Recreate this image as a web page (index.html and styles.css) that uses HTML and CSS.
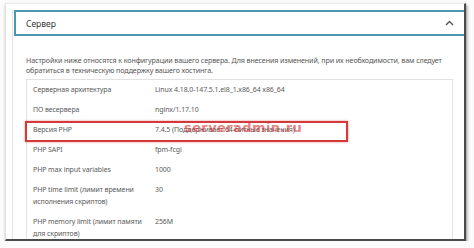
FILE: index.html
```html
<!DOCTYPE html>
<html lang="ru">
<head>
    <meta charset="UTF-8">
    <title>Сервер</title>
    <link rel="stylesheet" href="styles.css">
</head>
<body>

    <!-- Screenshot frame -->
    <div class="shot">
        <div class="panel">

            <!-- Accordion header -->
            <div class="acc-head">
                <span>Сервер</span>
                <svg class="chevron" width="9" height="6" viewBox="0 0 9 6">
                    <polyline points="1,5 4.5,1.5 8,5" fill="none" stroke="#555" stroke-width="1.4"/>
                </svg>
            </div>

            <p class="desc">Настройки ниже относятся к конфигурации вашего сервера. Для внесения изменений, при их необходимости, вам следует<br>обратиться в техническую поддержку вашего хостинга.</p>

            <div class="info">
                <div class="row"><div class="label">Серверная архитектура</div><div class="value">Linux 4.18.0-147.5.1.el8_1.x86_64 x86_64</div></div>
                <div class="row"><div class="label">ПО весервера</div><div class="value">nginx/1.17.10</div></div>
                <div class="row marked">
                    <div class="label">Версия PHP</div><div class="value">7.4.5 (Поддерживает 64-битные значения)</div>
                    <div class="highlight"></div>
                    <div class="watermark">serveradmin.ru</div>
                </div>
                <div class="row"><div class="label">PHP SAPI</div><div class="value">fpm-fcgi</div></div>
                <div class="row"><div class="label">PHP max input variables</div><div class="value">1000</div></div>
                <div class="row"><div class="label">PHP time limit (лимит времени<br>исполнения скриптов)</div><div class="value">30</div></div>
                <div class="row"><div class="label">PHP memory limit (лимит памяти<br>для скриптов)</div><div class="value">256M</div></div>
            </div>

        </div>
    </div>

</body>
</html>
```

FILE: styles.css
```css
body {
    margin: 0;
    background: #fbfbfb;
    font-family: "Noto Sans", "Open Sans", sans-serif;
    color: #555;
}
.shot {
    margin: 3px 0 0 5px;
    width: 461px;
    height: 238px;
    background: #fff;
    border-left: 1px solid #e2e2e2;
    border-top: 1px solid #ececec;
    border-right: 2px solid #4a4a4a;
    border-bottom: 2px solid #4a4a4a;
    box-shadow: 1px 2px 3px rgba(0, 0, 0, 0.45);
    overflow: hidden;
    padding: 6px 0 0 6px;
    box-sizing: border-box;
}
.panel {
    height: 100%;
    width: 453px;
    border-left: 1px solid #e4e4e4;
    border-right: 1px solid #e4e4e4;
    box-sizing: border-box;
}
.acc-head {
    display: flex;
    align-items: center;
    justify-content: space-between;
    height: 26px;
    width: 454px;
    margin-left: 1px;
    box-sizing: border-box;
    border: 2px solid #4d96b2;
    padding: 0 12px 0 10px;
    font-size: 8.5px;
    color: #333;
    background: #fff;
}
.desc {
    margin: 19px 0 0 13px;
    white-space: nowrap;
    font-size: 7.1px;
    letter-spacing: -0.1px;
    line-height: 10px;
    color: #555;
}
.info {
    margin: 4px 0 0 13px;
    width: 425px;
    border: 1px solid #e2e2e2;
    border-bottom: none;
    font-size: 7px;
    letter-spacing: -0.1px;
    line-height: 12px;
}
.row {
    display: flex;
    padding: 4px 0;
    position: relative;
}
.label {
    width: 117px;
    padding-left: 6px;
    flex-shrink: 0;
    white-space: nowrap;
    color: #5a5a5a;
}
.value {
    padding-left: 5px;
    color: #5a5a5a;
}
.highlight {
    position: absolute;
    left: -2px;
    top: 1px;
    width: 319px;
    height: 17px;
    border: 2px solid #d43a3a;
    box-shadow: 0 0 2px rgba(212, 58, 58, 0.6);
}
.watermark {
    position: absolute;
    left: 157px;
    top: 1px;
    font-family: "DejaVu Sans", sans-serif;
    font-weight: bold;
    font-size: 13px;
    line-height: 14px;
    color: rgba(214, 60, 60, 0.65);
    letter-spacing: 0.4px;
}
```
